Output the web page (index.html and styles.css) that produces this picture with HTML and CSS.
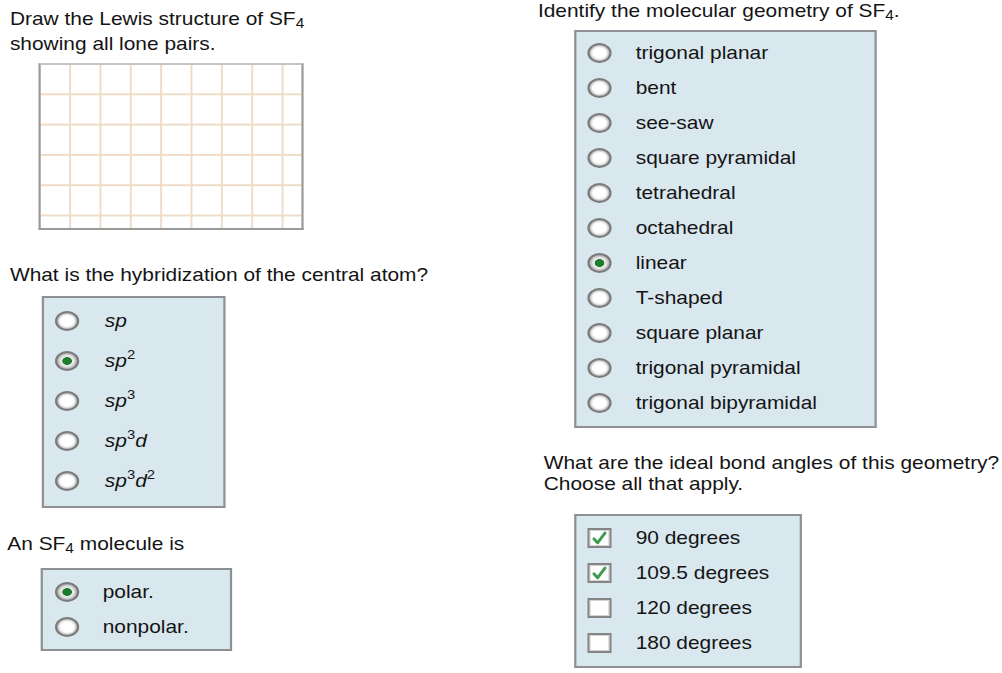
FILE: index.html
```html
<!DOCTYPE html>
<html lang="en">
<head>
<meta charset="utf-8">
<title>SF4 Lewis structure questions</title>
<link rel="stylesheet" href="styles.css">
</head>
<body>
<div class="page">
  <div class="col col-left">
    <p class="q q-lewis">Draw the Lewis structure of SF<sub>4</sub><br>showing all lone pairs.</p>
    <div class="canvas-grid"></div>

    <p class="q q-hyb">What is the hybridization of the central atom?</p>
    <div class="box box-hyb">
      <div class="opt opt-hyb"><span class="radio"></span><span class="lbl"><i>sp</i></span></div>
      <div class="opt opt-hyb"><span class="radio on"></span><span class="lbl"><i>sp</i><sup>2</sup></span></div>
      <div class="opt opt-hyb"><span class="radio"></span><span class="lbl"><i>sp</i><sup>3</sup></span></div>
      <div class="opt opt-hyb"><span class="radio"></span><span class="lbl"><i>sp</i><sup>3</sup><i>d</i></span></div>
      <div class="opt opt-hyb"><span class="radio"></span><span class="lbl"><i>sp</i><sup>3</sup><i>d</i><sup>2</sup></span></div>
    </div>

    <p class="q q-polar">An SF<sub>4</sub> molecule is</p>
    <div class="box box-polar">
      <div class="opt"><span class="radio on"></span><span class="lbl">polar.</span></div>
      <div class="opt"><span class="radio"></span><span class="lbl">nonpolar.</span></div>
    </div>
  </div>

  <div class="col col-right">
    <p class="q q-geo">Identify the molecular geometry of SF<sub>4</sub>.</p>
    <div class="box box-geo">
      <div class="opt"><span class="radio"></span><span class="lbl">trigonal planar</span></div>
      <div class="opt"><span class="radio"></span><span class="lbl">bent</span></div>
      <div class="opt"><span class="radio"></span><span class="lbl">see-saw</span></div>
      <div class="opt"><span class="radio"></span><span class="lbl">square pyramidal</span></div>
      <div class="opt"><span class="radio"></span><span class="lbl">tetrahedral</span></div>
      <div class="opt"><span class="radio"></span><span class="lbl">octahedral</span></div>
      <div class="opt"><span class="radio on"></span><span class="lbl">linear</span></div>
      <div class="opt"><span class="radio"></span><span class="lbl">T-shaped</span></div>
      <div class="opt"><span class="radio"></span><span class="lbl">square planar</span></div>
      <div class="opt"><span class="radio"></span><span class="lbl">trigonal pyramidal</span></div>
      <div class="opt"><span class="radio"></span><span class="lbl">trigonal bipyramidal</span></div>
    </div>

    <p class="q q-angles">What are the ideal bond angles of this geometry?<br>Choose all that apply.</p>
    <div class="box box-angles">
      <div class="opt"><span class="check"><svg viewBox="0 0 16 16" width="16" height="16"><path d="M3 8.8 L6.3 12.8 L13 3" fill="none" stroke="#3e9a4d" stroke-width="2.8" stroke-linecap="round" stroke-linejoin="round"/></svg></span><span class="lbl">90 degrees</span></div>
      <div class="opt"><span class="check"><svg viewBox="0 0 16 16" width="16" height="16"><path d="M3 8.8 L6.3 12.8 L13 3" fill="none" stroke="#3e9a4d" stroke-width="2.8" stroke-linecap="round" stroke-linejoin="round"/></svg></span><span class="lbl">109.5 degrees</span></div>
      <div class="opt"><span class="check"></span><span class="lbl">120 degrees</span></div>
      <div class="opt"><span class="check"></span><span class="lbl">180 degrees</span></div>
    </div>
  </div>
</div>
</body>
</html>
```
FILE: styles.css
```css
html, body {
  margin: 0;
  padding: 0;
  background: #ffffff;
  overflow: hidden;
}

body {
  font-family: "Liberation Sans", Arial, Helvetica, sans-serif;
  font-size: 19px;
  color: #141414;
}

/* The reference is a slightly horizontally stretched capture; the page is
   laid out at its natural width and widened as a whole. */
.page {
  display: flex;
  width: 911px;
  transform: scaleX(1.1);
  transform-origin: 0 0;
}

.col {
  display: flex;
  flex-direction: column;
  align-items: flex-start;
}

.col-left {
  width: 489px;
  flex: none;
  box-sizing: border-box;
  padding: 6px 0 0 9px;
}

.col-right {
  flex: 1;
}

.q {
  margin: 0;
  line-height: 22px;
  white-space: nowrap;
}

.q sub {
  font-size: 14px;
  line-height: 0;
  vertical-align: -3px;
}

.q-lewis {
  line-height: 25px;
}

.canvas-grid {
  margin: 7px 0 0 25.5px;
  width: 241px;
  height: 167px;
  box-sizing: border-box;
  border: 2px solid #9a9a9a;
  border-top-color: #c4c4c4;
  background-color: #ffffff;
  background-image:
    linear-gradient(to right, transparent calc(100% - 1.8px), #eedcc7 0),
    linear-gradient(to bottom, transparent calc(100% - 2px), #eedcc7 0);
  background-size: 27.6px 100%, 100% 30.3px;
}

.q-hyb {
  margin-top: 34px;
}

.q-polar {
  margin: 25px 0 0 -2.4px;
}

.q-geo {
  margin-top: 0;
}

.q-angles {
  margin: 24.2px 0 0 5.3px;
  line-height: 21px;
}

.box {
  box-sizing: border-box;
  border: 2px solid #8d9195;
  background: #d9e7ee;
  display: flex;
  flex-direction: column;
}

.box-hyb {
  margin: 9.9px 0 0 29.2px;
  width: 167.3px;
  height: 212px;
  padding: 3px 0 5px 9.8px;
}

.box-polar {
  margin: 12.9px 0 0 28.3px;
  width: 173.6px;
  height: 83px;
  padding: 4.5px 0 4.5px 10.7px;
}

.box-geo {
  margin: 8px 0 0 32.8px;
  width: 275.5px;
  height: 398px;
  padding: 3.5px 0 5.5px 9.8px;
}

.box-angles {
  margin: 19.8px 0 0 32.8px;
  width: 207.3px;
  height: 154px;
  padding: 4.5px 0 5.5px 9.8px;
}

.opt {
  display: flex;
  align-items: center;
  gap: 22.3px;
  height: 35px;
  flex: none;
}

.box-polar .opt {
  gap: 21.4px;
}

.opt-hyb {
  height: 40px;
  gap: 23.3px;
}

.lbl {
  line-height: 22px;
  white-space: nowrap;
}

.lbl sup {
  font-size: 13.5px;
  line-height: 0;
  vertical-align: 8px;
  font-style: normal;
}

.radio {
  flex: none;
  width: 22px;
  height: 20px;
  box-sizing: border-box;
  border-radius: 50%;
  border: 2px solid #7a7a7a;
  background: radial-gradient(closest-side, #ffffff 0 62%, #ececec 78%, #afafaf 100%);
}

.radio.on {
  background: radial-gradient(closest-side, #1c7d2d 0 45%, #efefef 52%, #dcdcdc 75%, #a6a6a6 100%);
}

.check {
  flex: none;
  width: 22px;
  height: 20px;
  box-sizing: border-box;
  border: 2px solid #858585;
  background: #ffffff;
  box-shadow: inset 0 0 0 1px #d4d4d4;
  display: flex;
  align-items: center;
  justify-content: center;
}

.check svg {
  display: block;
}
```
